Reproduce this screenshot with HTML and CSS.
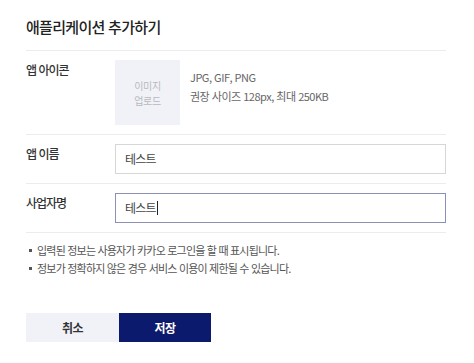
FILE: index.html
```html
<!DOCTYPE html>
<html lang="ko">
<head>
<meta charset="utf-8">
<link rel="stylesheet" href="styles.css">
</head>
<body>
<div class="page">
  <h1 class="title">애플리케이션 추가하기</h1>
  <div class="row row-icon">
    <div class="label">앱 아이콘</div>
    <div class="field icon-field">
      <div class="upload"><span>이미지</span><span>업로드</span></div>
      <div class="hint">
        <div>JPG, GIF, PNG</div>
        <div>권장 사이즈 128px, 최대 250KB</div>
      </div>
    </div>
  </div>
  <div class="row">
    <div class="label">앱 이름</div>
    <div class="field"><div class="input">테스트</div></div>
  </div>
  <div class="row">
    <div class="label">사업자명</div>
    <div class="field"><div class="input focused">테스트<span class="caret"></span></div></div>
  </div>
  <ul class="notes">
    <li>입력된 정보는 사용자가 카카오 로그인을 할 때 표시됩니다.</li>
    <li>정보가 정확하지 않은 경우 서비스 이용이 제한될 수 있습니다.</li>
  </ul>
  <div class="buttons">
    <button class="btn cancel">취소</button>
    <button class="btn save">저장</button>
  </div>
</div>
</body>
</html>
```

FILE: styles.css
```css
* { box-sizing: border-box; }
html, body { margin: 0; padding: 0; background: #fff; }
body {
  font-family: "Noto Sans CJK KR", "Noto Sans", sans-serif;
  color: #333;
}
.page {
  width: 474px;
  padding: 0 28px 0 26px;
}
.title {
  margin: 0;
  height: 51px;
  padding-top: 15px;
  font-size: 15px;
  line-height: 24px;
  font-weight: 500;
  letter-spacing: -0.7px;
  color: #222;
  border-bottom: 1px solid #ececec;
}
.row {
  display: flex;
  padding: 9px 0;
  border-bottom: 1px solid #ececec;
}
.label {
  width: 89px;
  flex: none;
  font-size: 12px;
  font-weight: 500;
  letter-spacing: -1px;
  color: #333;
  line-height: 18px;
  padding-top: 1px;
}
.field { flex: 1; }
.icon-field {
  display: flex;
  align-items: flex-start;
  gap: 10px;
}
.upload {
  width: 65px;
  height: 65px;
  background: #f1f2f7;
  color: #b8b9c0;
  font-size: 10px;
  font-weight: 400;
  letter-spacing: -0.3px;
  line-height: 14.5px;
  display: flex;
  flex-direction: column;
  align-items: center;
  justify-content: center;
  padding-top: 2px;
}
.upload span { display: block; }
.hint {
  padding-top: 8px;
  font-size: 11px;
  font-weight: 400;
  letter-spacing: -0.5px;
  line-height: 19px;
  color: #666;
}
.input {
  height: 30px;
  border: 1px solid #d6d6d6;
  padding: 0 9px;
  font-size: 12px;
  letter-spacing: -0.8px;
  line-height: 28px;
  color: #444;
  background: #fff;
}
.input.focused { border-color: #8c8fb6; }
.caret {
  display: inline-block;
  width: 1px;
  height: 14px;
  background: #222;
  vertical-align: -2px;
  margin-left: 1px;
}
.notes {
  list-style: none;
  margin: 0;
  padding: 8px 0 0 0;
  font-size: 11px;
  font-weight: 400;
  letter-spacing: -0.8px;
  line-height: 18px;
  color: #555;
}
.notes li { position: relative; padding-left: 11px; }
.notes li::before {
  content: "";
  position: absolute;
  left: 3px;
  top: 8px;
  width: 3px;
  height: 3px;
  background: #555;
}
.buttons {
  display: flex;
  margin-top: 36px;
}
.btn {
  height: 29px;
  border: none;
  font-family: inherit;
  font-size: 12px;
  font-weight: 700;
  letter-spacing: -0.5px;
  padding: 0;
}
.cancel { width: 93px; background: #f1f2f7; color: #333; }
.save { width: 92px; background: #0b1a6d; color: #fff; }
```
